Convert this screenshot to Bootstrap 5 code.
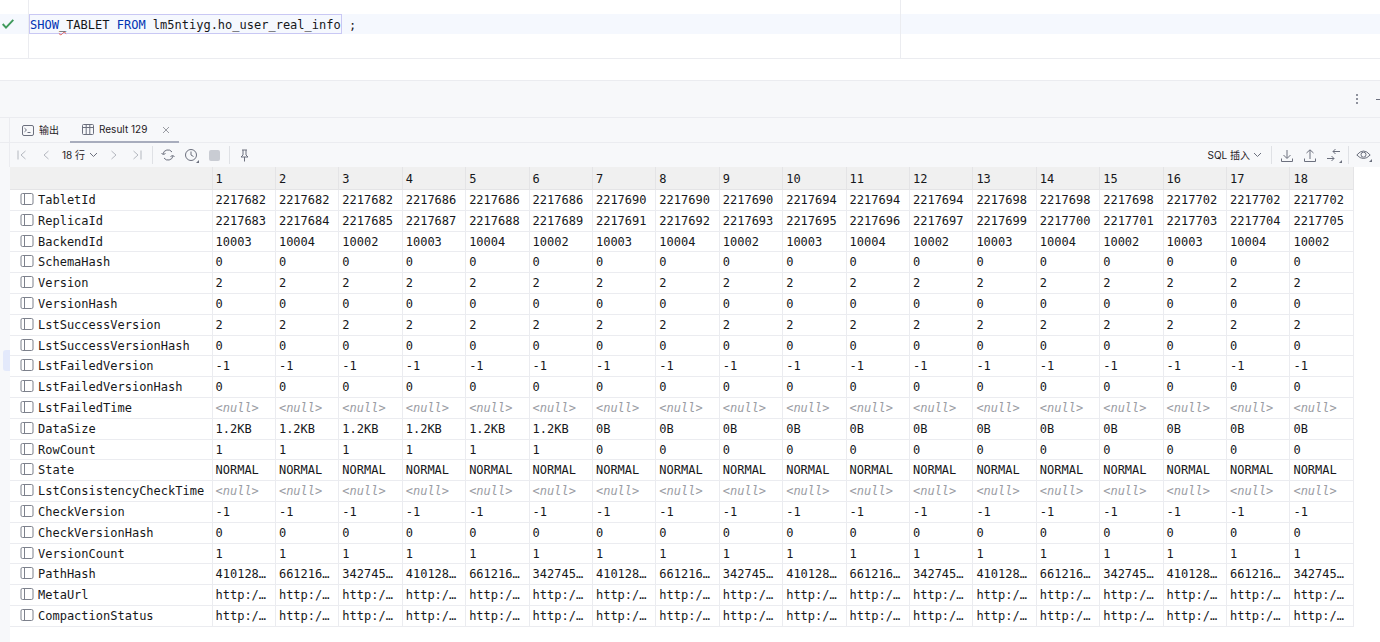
<!DOCTYPE html>
<html lang="zh">
<head>
    <meta charset="UTF-8">
    <meta name="viewport" content="width=device-width, initial-scale=1.0">
    <title>Result 129</title>
    <link href="https://cdn.jsdelivr.net/npm/bootstrap@5.3.0/dist/css/bootstrap.min.css" rel="stylesheet">
    <style>
        html, body { height: 642px; overflow: hidden; background: #fff; }
        body { font-family: "Inter", "Noto Sans CJK SC", sans-serif; font-size: 10px; color: #1f2024; }
        .mono { font-family: "DejaVu Sans Mono", monospace; font-size: 12px; }

        /* editeur */
        .editor { height: 59px; border-bottom: 1px solid #ebecf0; }
        .ed-gutter { width: 29px; padding-top: 14px; border-right: 1px solid #ebecf0; }
        .ed-code { width: 872px; padding-top: 14px; border-right: 1px solid #ebecf0; }
        .ed-rest { padding-top: 14px; }
        .ed-line { height: 20px; background: #f5f8fe; line-height: 20px; }
        .ed-check { margin-left: 2px; }
        .ed-sel { display: inline-block; height: 20px; border: 1px solid #c9c8f4; line-height: 20px; color: #16171a; }
        .kw { color: #0033b3; }
        .squig { text-decoration: underline wavy #e0605a 1px; text-underline-offset: 2px; }

        .spacer-white { height: 22px; border-bottom: 1px solid #ebecf0; }
        .panel-head { height: 37px; background: #f7f8fa; border-bottom: 1px solid #ebecf0; }
        .tool-ico { color: #6c707e; }

        /* panneau resultats */
        .side-rail { width: 10px; height: 476px; background: #f7f8fa; }
        .side-chip { width: 7px; height: 21px; margin-left: 3px; margin-top: 183px; background: #e3e9fb; border-radius: 3px 0 0 3px; }
        .left-edge { width: 10px; flex: none; align-self: stretch; border-right: 1px solid #ebecf0; }
        .tabs-row { height: 25px; background: #f7f8fa; border-bottom: 1px solid #ebecf0; }
        .tab-item { height: 25px; width: 60px; padding-left: 12px; gap: 5px; white-space: nowrap; }
        .tab-active { width: 109px; padding-left: 12px; border-bottom: 2px solid #a8adbd; }
        .tab-close { margin-left: 10px; }
        .tool-row { height: 24px; background: #f7f8fa; }
        .tool-sep { width: 1px; height: 18px; background: #dfe1e5; }
        .pg-dis { color: #b4b8bf; }
        .stop-box { width: 11px; height: 11px; background: #c9ccd3; border-radius: 2px; }
        .ml3 { margin-left: 3px; } .ml4 { margin-left: 4px; } .ml6 { margin-left: 6px; } .ml7 { margin-left: 7px; }
        .ml8 { margin-left: 8px; } .ml9 { margin-left: 9px; } .ml10 { margin-left: 10px; } .ml11 { margin-left: 11px; }
        .ml13 { margin-left: 13px; } .ml15 { margin-left: 15px; } .ml16 { margin-left: 16px; }
        .mr8 { margin-right: 8px; }

        /* grille */
        .res-grid {
            display: grid;
            grid-template-columns: 202.5px repeat(18, 63.42px);
            grid-template-rows: 23px repeat(21, 20.81px);
            font-family: "DejaVu Sans Mono", monospace; font-size: 12px; color: #16171a;
        }
        .gc {
            padding-left: 3px; line-height: 21px; white-space: nowrap; overflow: hidden;
            border-right: 1px solid #ebecf0; border-bottom: 1px solid #ebecf0; background: #fff;
        }
        .gc-head { background: #f0f0f0; border-color: #e4e4e6; line-height: 24px; }
        .gc-name { padding-left: 10px; }
        .gc-name svg { margin-right: 4px; vertical-align: -2px; }
        .gc-nul { color: #9a9ca3; font-style: italic; }
    </style>
</head>
<body>

<svg width="0" height="0" class="position-absolute">
    <symbol id="i-rowdoc" viewBox="0 0 14 14">
        <rect x="1" y="1.5" width="12" height="11" rx="1.5" fill="none" stroke="#7d818c"/>
        <path d="M4.500 1.500v11" stroke="#7d818c" fill="none"/>
    </symbol>
</svg>

<!-- editeur -->
<div class="editor d-flex">
    <div class="ed-gutter flex-shrink-0">
        <div class="ed-line d-flex align-items-center">
            <svg class="ed-check" width="12" height="10" viewBox="0 0 12 10"><path d="M.7 5 4 8.600 11.300 .8" fill="none" stroke="#3f9a5c" stroke-width="1.900"/></svg>
        </div>
    </div>
    <div class="ed-code flex-shrink-0">
        <div class="ed-line mono"><span class="ed-sel"><span class="kw">SHOW</span><span class="squig">_</span>TABLET <span class="kw">FROM</span> lm5ntiyg.ho_user_real_info</span> ;</div>
    </div>
    <div class="ed-rest flex-grow-1"><div class="ed-line"></div></div>
</div>
<div class="spacer-white"></div>

<!-- barre du panneau -->
<div class="panel-head d-flex align-items-center justify-content-end">
    <svg class="tool-ico" width="4" height="12" viewBox="0 0 4 12"><circle cx="2" cy="2" r="1" fill="currentColor"/><circle cx="2" cy="6" r="1" fill="currentColor"/><circle cx="2" cy="10" r="1" fill="currentColor"/></svg>
    <svg class="tool-ico ms-3" width="5" height="12" viewBox="0 0 5 12"><path d="M1 6.500h4" stroke="currentColor" fill="none"/></svg>
</div>

<!-- onglets -->
<div class="tabs-row d-flex">
    <div class="left-edge"></div>
    <div class="tab-item d-flex align-items-center">
        <svg width="12" height="11" viewBox="0 0 12 11"><rect x=".5" y=".5" width="11" height="10" rx="1.500" fill="none" stroke="#6c707e"/><path d="M2.500 3.200 4.500 5 2.500 6.800M5.500 7.500h3" fill="none" stroke="#6c707e"/></svg>
        <span>输出</span>
    </div>
    <div class="tab-item tab-active d-flex align-items-center">
        <svg width="12" height="11" viewBox="0 0 12 11"><rect x=".5" y=".5" width="11" height="10" rx="1" fill="none" stroke="#6c707e"/><path d="M.5 3.500h11M4.200 .5v10M7.800 .5v10" fill="none" stroke="#6c707e"/></svg>
        <span>Result 129</span>
        <svg class="tab-close" width="8" height="8" viewBox="0 0 8 8"><path d="M1 1l6 6M7 1 1 7" stroke="#9a9ca3" fill="none"/></svg>
    </div>
</div>

<!-- barre d'outils -->
<div class="tool-row d-flex align-items-center">
    <div class="left-edge"></div>
    <div class="d-flex align-items-center pg-dis">
        <svg class="ml7" width="10" height="10" viewBox="0 0 10 10"><path d="M1 .5v9M8.500 1 4 5l4.500 4" fill="none" stroke="currentColor"/></svg>
        <svg class="ml16" width="6" height="10" viewBox="0 0 6 10"><path d="M5.500 1 1 5l4.500 4" fill="none" stroke="currentColor"/></svg>
    </div>
    <span class="ml13 text-nowrap">18 行</span>
    <svg class="tool-ico ml4" width="9" height="6" viewBox="0 0 9 6"><path d="M1 1l3.500 3.500L8 1" fill="none" stroke="currentColor"/></svg>
    <div class="d-flex align-items-center pg-dis">
        <svg class="ml13" width="6" height="10" viewBox="0 0 6 10"><path d="M.5 1 5 5 .5 9" fill="none" stroke="currentColor"/></svg>
        <svg class="ml15" width="10" height="10" viewBox="0 0 10 10"><path d="M9 .5v9M1.500 1 6 5 1.500 9" fill="none" stroke="currentColor"/></svg>
    </div>
    <div class="tool-sep ml10"></div>
    <svg class="tool-ico ml8" width="14" height="14" viewBox="0 0 14 14"><path d="M2 6a5 5 0 0 1 9-2M12 8a5 5 0 0 1-9 2M.5 5 2.500 7 4.500 5M9.500 9l2-2 2 2" fill="none" stroke="currentColor"/></svg>
    <svg class="tool-ico ml9" width="15" height="15" viewBox="0 0 15 15"><circle cx="7" cy="7" r="5.500" fill="none" stroke="currentColor"/><path d="M7 3.500V7l2.500 1.500" fill="none" stroke="currentColor"/><path d="M15 12v3h-3z" fill="currentColor"/></svg>
    <div class="stop-box ml10"></div>
    <div class="tool-sep ml9"></div>
    <svg class="tool-ico ml9" width="11" height="13" viewBox="0 0 11 13"><path d="M3 1h5M4 1v5L2 8h7L7 6V1M5.500 8v4.500" fill="none" stroke="currentColor"/></svg>

    <div class="ms-auto d-flex align-items-center">
        <span class="text-nowrap">SQL 插入</span>
        <svg class="tool-ico ml3" width="9" height="6" viewBox="0 0 9 6"><path d="M1 1l3.500 3.500L8 1" fill="none" stroke="currentColor"/></svg>
        <div class="tool-sep ml9"></div>
        <svg class="tool-ico ml9" width="12" height="13" viewBox="0 0 12 13"><path d="M6 1v8M2.500 6 6 9.500 9.500 6M.5 9.500v3h11v-3" fill="none" stroke="currentColor"/></svg>
        <svg class="tool-ico ml11" width="12" height="13" viewBox="0 0 12 13"><path d="M6 10V1M2.500 4 6 .8 9.500 4M.5 9.500v3h11v-3" fill="none" stroke="currentColor"/></svg>
        <svg class="tool-ico ml10" width="16" height="15" viewBox="0 0 16 15"><path d="M14 3.500H7M9.500 1 7 3.500 9.500 6M1 10.500h7M5.500 8 8 10.500 5.500 13" fill="none" stroke="currentColor"/><path d="M16 12v3h-3z" fill="currentColor"/></svg>
        <div class="tool-sep ml6"></div>
        <svg class="tool-ico ml7 mr8" width="16" height="13" viewBox="0 0 16 13"><path d="M.8 6Q7.500-2 14.200 6 7.500 13 .8 6z" fill="none" stroke="currentColor"/><circle cx="7.500" cy="5.700" r="2.500" fill="none" stroke="currentColor"/><path d="M16 10v3h-3z" fill="currentColor"/></svg>
    </div>
</div>

<!-- tableau -->
<div class="d-flex">
    <div class="side-rail flex-shrink-0"><div class="side-chip"></div></div>
    <div class="res-grid" id="grid"></div>
</div>

<script src="https://cdn.jsdelivr.net/npm/bootstrap@5.3.0/dist/js/bootstrap.bundle.min.js"></script>
<script>
    const N = 18;
    const same = v => Array(N).fill(v);
    const NUL = '<null>';
    const cyc = arr => Array.from({length: N}, (_, i) => arr[i % arr.length]);
    const tablets = Array.from({length: N}, (_, i) => String(2217682 + Math.floor(i / 3) * 4));
    const replicas = ['2217683','2217684','2217685','2217687','2217688','2217689','2217691','2217692','2217693','2217695','2217696','2217697','2217699','2217700','2217701','2217703','2217704','2217705'];
    const firstSix = (a, b) => Array.from({length: N}, (_, i) => i < 6 ? a : b);

    const rows = [
        ['TabletId', tablets],
        ['ReplicaId', replicas],
        ['BackendId', cyc(['10003','10004','10002'])],
        ['SchemaHash', same('0')],
        ['Version', same('2')],
        ['VersionHash', same('0')],
        ['LstSuccessVersion', same('2')],
        ['LstSuccessVersionHash', same('0')],
        ['LstFailedVersion', same('-1')],
        ['LstFailedVersionHash', same('0')],
        ['LstFailedTime', same(NUL)],
        ['DataSize', firstSix('1.2KB', '0B')],
        ['RowCount', firstSix('1', '0')],
        ['State', same('NORMAL')],
        ['LstConsistencyCheckTime', same(NUL)],
        ['CheckVersion', same('-1')],
        ['CheckVersionHash', same('0')],
        ['VersionCount', same('1')],
        ['PathHash', cyc(['410128…','661216…','342745…'])],
        ['MetaUrl', same('http:/…')],
        ['CompactionStatus', same('http:/…')]
    ];

    const grid = document.getElementById('grid');
    function addCell(cls, text) {
        const c = document.createElement('div');
        c.className = 'gc ' + cls;
        c.textContent = text;
        grid.appendChild(c);
        return c;
    }

    addCell('gc-head', '');
    for (let i = 1; i <= N; i++) addCell('gc-head', i);

    rows.forEach(([name, vals]) => {
        const first = addCell('gc-name', '');
        first.innerHTML = '<svg width="14" height="14"><use href="#i-rowdoc"/></svg>' + name;
        vals.forEach(v => addCell(v === NUL ? 'gc-nul' : '', v));
    });
</script>
</body>
</html>
